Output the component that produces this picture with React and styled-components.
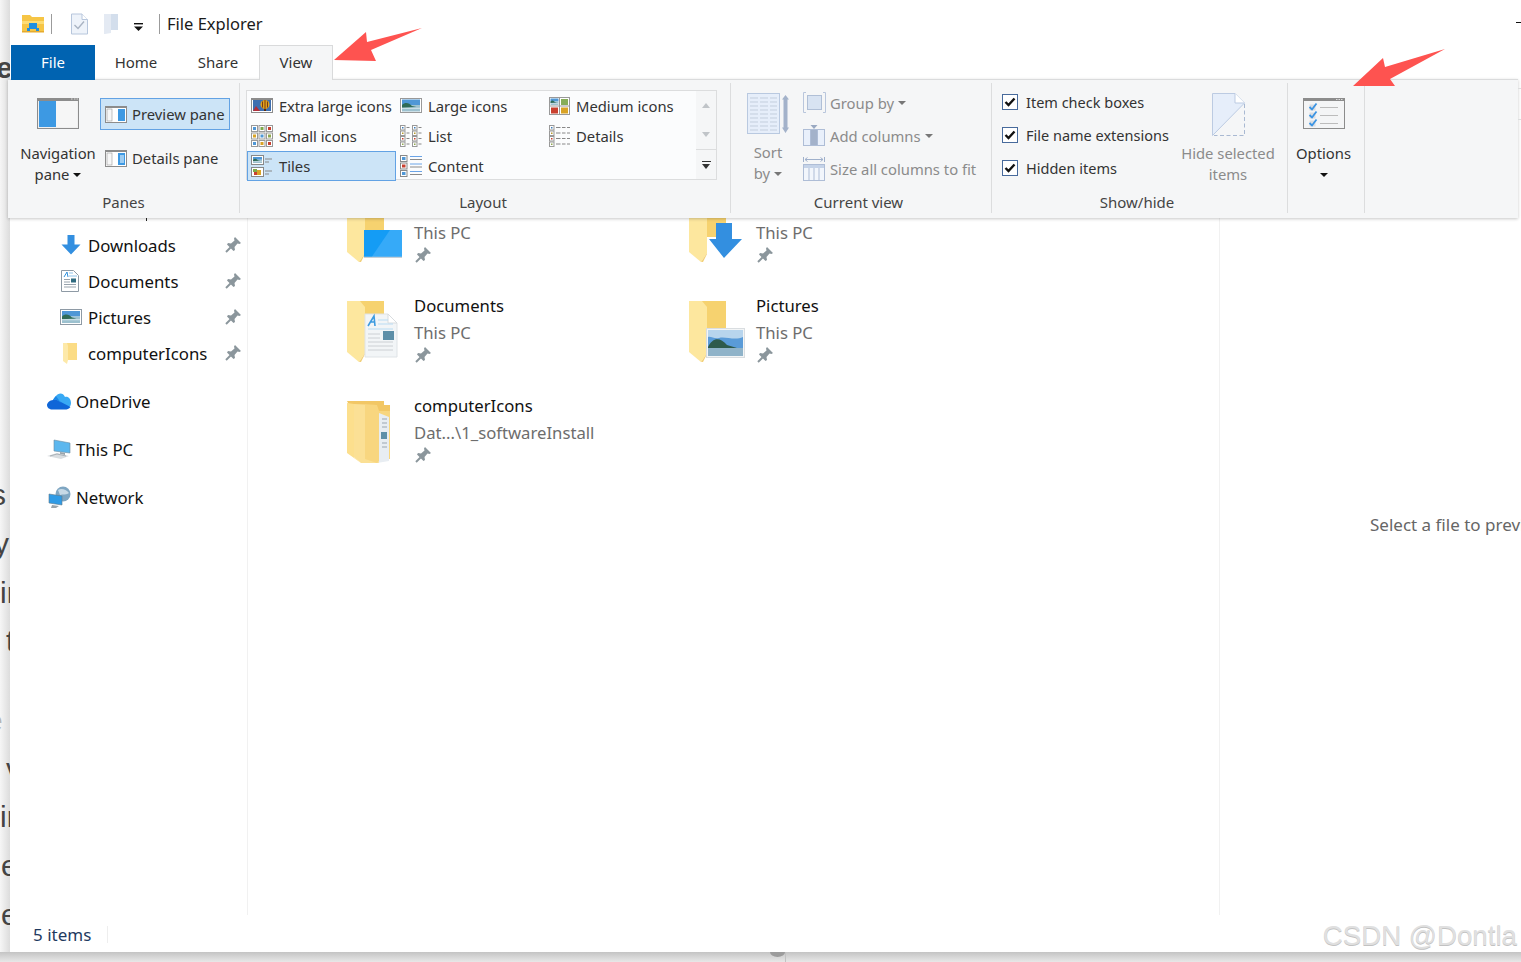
import React from "react";
import styled, { createGlobalStyle } from "styled-components";

const GlobalStyle = createGlobalStyle`
  html, body {
    margin: 0;
    padding: 0;
    background: #e4e4e4;
    font-family: "Noto Sans", "Open Sans", sans-serif;
  }
  * { box-sizing: border-box; }
`;

const Page = styled.div`
  position: relative;
  width: 1521px;
  height: 962px;
  overflow: hidden;
`;

const Desk = styled.div`
  display: flex;
  height: 952px;
`;

const BackEdge = styled.div`
  width: 10px;
  flex: none;
  overflow: hidden;
  padding-top: 48px;
  background: linear-gradient(90deg, #f6f6f6, #dcdcdc);
  font-family: "Liberation Sans", sans-serif;
  font-size: 30px;
  color: #444;
`;

const EdgeLine = styled.div`
  height: ${p => p.$h}px;
  line-height: ${p => p.$h}px;
  white-space: nowrap;
  margin-left: ${p => p.$shift || 0}px;
  font-weight: ${p => (p.$bold ? 700 : 400)};
  opacity: ${p => (p.$faint ? 0.35 : 1)};
`;

const Shade = styled.div`
  position: relative;
  height: 10px;
  overflow: hidden;
  background: linear-gradient(180deg, #c4c4c4, #e8e8e8);
`;

const ShadeThumb = styled.div`
  position: absolute;
  left: 770px;
  top: -5px;
  width: 15px;
  height: 10px;
  border-radius: 50%;
  background: #9c9c9c;
`;

const ShadeLine = styled.div`
  position: absolute;
  left: 785px;
  top: 0;
  width: 1px;
  height: 10px;
  background: #c2c2c2;
`;

const Explorer = styled.div`
  flex: 1;
  min-width: 0;
  display: flex;
  flex-direction: column;
  background: #fff;
`;

const TitleBar = styled.div`
  display: flex;
  align-items: center;
  height: 45px;
  padding: 2px 0 0 12px;
  font-size: 16.5px;
  color: #1a1a1a;
`;

const TitleSep = styled.div`
  width: 1px;
  height: 20px;
  background: #9b9b9b;
  margin: 0 ${p => p.$right}px 0 ${p => p.$left}px;
`;

const QuickIcon = styled.svg`
  flex: none;
  margin-right: ${p => p.$right || 0}px;
  margin-top: ${p => p.$top || 0}px;
`;

const MinGlyph = styled.div`
  margin-left: auto;
  width: 5px;
  height: 1px;
  margin-bottom: 3px;
  background: #111;
`;

const Tabs = styled.div`
  display: flex;
  height: 35px;
  font-size: 15px;
  color: #333;
`;

const Tab = styled.div`
  display: flex;
  align-items: center;
  justify-content: center;
  width: ${p => p.$w}px;
  margin-left: ${p => p.$left || 0}px;
  height: 35px;
  padding-bottom: 2px;
  background: ${p => (p.$file ? "#0063b1" : p.$active ? "#f5f6f7" : "transparent")};
  color: ${p => (p.$file ? "#fff" : "#333")};
  border: ${p => (p.$active ? "1px solid #d9dadb" : "none")};
  border-bottom: none;
  position: relative;
  z-index: 3;
`;

const Ribbon = styled.div`
  position: relative;
  z-index: 2;
  display: flex;
  width: 1510px;
  height: 139px;
  margin: -1px 0 0 -2px;
  padding: 3px 0 5px;
  background: #f5f6f7;
  border-top: 1px solid #dadbdc;
  box-shadow: 0 1px 3px rgba(0, 0, 0, 0.22);
  font-size: 14.8px;
  color: #333;
`;

const Group = styled.div`
  display: flex;
  flex-direction: column;
  width: ${p => p.$w}px;
  flex: none;
  border-right: 1px solid #dcddde;
`;

const GroupBody = styled.div`
  display: flex;
  height: 110px;
  padding: ${p => p.$top || 0}px 0 0 ${p => p.$left || 0}px;
`;

const GroupLabel = styled.div`
  height: 20px;
  line-height: 18px;
  text-align: center;
  font-size: 15px;
  color: #444;
  padding-right: ${p => p.$padr || 0}px;
`;

const BigButton = styled.div`
  display: flex;
  flex-direction: column;
  align-items: center;
  width: ${p => p.$w}px;
  flex: none;
  padding-top: ${p => p.$top || 0}px;
  color: ${p => (p.$off ? "#8b8b8b" : "#333")};
  line-height: 21px;
  text-align: center;
`;

const BigIcon = styled.svg`
  display: block;
  margin-bottom: ${p => p.$gap}px;
`;

const Caret = styled.span`
  display: inline-block;
  width: 0;
  height: 0;
  margin-left: ${p => p.$left ?? 4}px;
  vertical-align: 3px;
  border-left: 4px solid transparent;
  border-right: 4px solid transparent;
  border-top: 4px solid ${p => (p.$off ? "#777" : "#111")};
`;

const PaneColumn = styled.div`
  display: flex;
  flex-direction: column;
  gap: 12px;
  margin-left: 4px;
`;

const PaneButton = styled.div`
  display: flex;
  align-items: center;
  gap: 5px;
  width: 130px;
  height: 32px;
  padding-left: 4px;
  white-space: nowrap;
  border: 1px solid ${p => (p.$on ? "#62a2e4" : "transparent")};
  background: ${p => (p.$on ? "#cce4f7" : "transparent")};
`;

const Gallery = styled.div`
  display: grid;
  grid-template-columns: repeat(3, 149px);
  grid-auto-rows: 30px;
  width: 450px;
  height: 90px;
  background: #fbfcfd;
  border: 1px solid #dcddde;
  border-right: none;
`;

const Cell = styled.div`
  display: flex;
  align-items: center;
  gap: 6px;
  padding: 0 0 1px 4px;
  white-space: nowrap;
  letter-spacing: ${p => (p.$tight ? "-0.13px" : "0")};
  box-shadow: ${p => (p.$on ? "inset 0 0 0 1px #62a2e4" : "none")};
  background: ${p => (p.$on ? "#cce4f7" : "transparent")};
`;

const GalleryScroll = styled.div`
  display: flex;
  flex-direction: column;
  width: 21px;
  height: 90px;
  border: 1px solid #dcddde;
  border-left: none;
`;

const ScrollStep = styled.div`
  display: flex;
  align-items: center;
  justify-content: center;
  flex-direction: column;
  flex: 1;
  gap: 2px;
  border-top: ${p => (p.$more ? "1px solid #dcddde" : "none")};
`;

const Triangle = styled.span`
  width: 0;
  height: 0;
  border-left: 4px solid transparent;
  border-right: 4px solid transparent;
  ${p => p.$up && "border-bottom: 5px solid #c0c4c8;"}
  ${p => p.$down && `border-top: 5px solid ${p.$dark ? "#333" : "#c0c4c8"};`}
`;

const MoreDash = styled.span`
  width: 9px;
  height: 1px;
  background: #333;
`;

const SmallRows = styled.div`
  display: flex;
  flex-direction: column;
  margin-left: ${p => p.$left || 0}px;
  margin-top: ${p => p.$top || 0}px;
  width: ${p => p.$w || "auto"};
`;

const SmallRow = styled.div`
  display: flex;
  align-items: center;
  gap: ${p => p.$gap || 4}px;
  height: 33px;
  white-space: nowrap;
  font-size: ${p => p.$size || "inherit"};
  color: ${p => (p.$off ? "#8b8b8b" : "#333")};
`;

const RibbonEnd = styled.div`
  position: absolute;
  right: -3px;
  top: 8px;
  width: 3px;
  height: 32px;
  border-top: 1px solid #dcddde;
  border-bottom: 1px solid #dcddde;
`;

const Body = styled.div`
  display: flex;
  height: 781px;
  margin-top: -84px;
`;

const Nav = styled.div`
  width: 238px;
  flex: none;
  padding-top: 84px;
  border-right: 1px solid #f1f1f1;
  font-size: 16.8px;
  color: #111;
`;

const NavTick = styled.div`
  width: 1px;
  height: 3px;
  margin: 0 0 6px 136px;
  background: #222;
`;

const NavRow = styled.div`
  display: flex;
  align-items: center;
  height: 36px;
  padding-left: ${p => (p.$top ? 37 : 40)}px;
  padding-right: 6px;
  margin-top: ${p => p.$gap || 0}px;
`;

const NavIcon = styled.svg`
  flex: none;
  margin-left: ${p => p.$left || 0}px;
  margin-right: ${p => p.$right ?? 6}px;
`;

const ArrowSlot = styled.span`
  display: flex;
  flex: none;
  margin: 0 7px 0 11px;
`;

const NavText = styled.span`
  flex: 1;
  white-space: nowrap;
`;

const Main = styled.div`
  flex: 1;
  display: grid;
  grid-template-columns: repeat(2, 342px);
  grid-auto-rows: 100px;
  align-content: start;
  padding: 61px 0 0 99px;
  border-right: 1px solid #f1f1f1;
`;

const Tile = styled.div`
  display: flex;
  align-items: flex-start;
`;

const TileIcon = styled.svg`
  flex: none;
  margin-top: 6px;
`;

const TileText = styled.div`
  display: flex;
  flex-direction: column;
  margin-left: 7px;
  font-size: 16.7px;
  color: #111;
`;

const TileName = styled.div`
  height: 21px;
  line-height: 21px;
`;

const TileSub = styled.div`
  height: 27px;
  line-height: 33px;
  color: #6d6d6d;
  white-space: nowrap;
`;

const TilePin = styled.div`
  margin: 4px 0 0 1px;
  height: 16px;
`;

const Preview = styled.div`
  width: 301px;
  flex: none;
  display: flex;
  align-items: center;
  padding-left: 150px;
  overflow: hidden;
  white-space: nowrap;
  font-size: 17px;
  color: #666;
`;

const StatusBar = styled.div`
  display: flex;
  align-items: center;
  height: 37px;
  padding: 2px 0 0 23px;
  font-size: 17px;
  color: #1f3a5f;
`;

const StatusSep = styled.div`
  width: 1px;
  height: 17px;
  margin-left: 16px;
  background: #eeeeee;
`;

const Watermark = styled.div`
  position: absolute;
  right: 4px;
  top: 918px;
  font-family: "Liberation Sans", sans-serif;
  font-size: 27.7px;
  line-height: 36px;
  color: #e0e0e0;
  text-shadow: 0 1px 0 #c2c2c2;
  white-space: nowrap;
`;

const ArrowLayer = styled.svg`
  position: absolute;
  left: 0;
  top: 0;
  z-index: 5;
  pointer-events: none;
`;

/* little drawings */

const Frame = ({ w = 22, h = 17, children }) => (
  <svg width={w} height={h} viewBox={`0 0 ${w} ${h}`} style={{ flex: "none" }}>
    <rect x="0.5" y="0.5" width={w - 1} height={h - 1} fill="#fff" stroke="#8c8c8c" />
    <rect x="0" y="0" width={w} height="2" fill="#8c8c8c" />
    {children}
  </svg>
);

const Scene = ({ x = 0, y = 0, w = 20, h = 13 }) => (
  <g transform={`translate(${x} ${y}) scale(${w / 20} ${h / 13})`}>
    <rect width="20" height="6" fill="#4f97d6" />
    <rect y="6" width="20" height="7" fill="#9cc1cf" />
    <path d="M0 6 C4 2 8 4 11 7 L16 8 L0 9 Z" fill="#2f6b57" />
    <path d="M0 9 H20 V10 H0 Z" fill="#dce9ef" />
  </g>
);

const NavPaneIcon = () => (
  <BigIcon width="42" height="31" viewBox="0 0 42 31" $gap={14}>
    <rect x="0.5" y="0.5" width="41" height="30" fill="#f0f0f0" stroke="#8c8c8c" />
    <rect x="0" y="0" width="42" height="3" fill="#8c8c8c" />
    <rect x="2" y="3" width="17" height="26" fill="#3d99e3" />
    <rect x="19" y="3" width="21" height="26" fill="#f6f6f6" />
    <path d="M34 1h1.500M37 1h1.500M39.500 1h1.500" stroke="#d8d8d8" />
  </BigIcon>
);

const PreviewPaneIcon = () => (
  <Frame>
    <rect x="2" y="3" width="5" height="12" fill="#f7f7f7" stroke="#999" strokeWidth=".6" />
    <rect x="8" y="3" width="4" height="12" fill="#fff" />
    <rect x="13" y="3" width="7" height="12" fill="#3d99e3" />
  </Frame>
);

const DetailsPaneIcon = () => (
  <Frame>
    <rect x="2" y="3" width="5" height="12" fill="#f7f7f7" stroke="#999" strokeWidth=".6" />
    <rect x="8" y="3" width="4" height="12" fill="#fff" />
    <rect x="13" y="3" width="7" height="12" fill="#3d99e3" />
    <path d="M15 6h4M15 8h4M15 10h4M15 12h4" stroke="#fff" />
  </Frame>
);

const ExtraLargeIcon = () => (
  <Frame h={15}>
    <rect x="2" y="2" width="18" height="11" fill="#3e6fb0" />
    <path d="M2 13 L5 8 L9 13 Z" fill="#b2303a" />
    <circle cx="14" cy="6.500" r="4.500" fill="#e0a21b" />
    <path d="M14 2v9M11.500 3.500v6M16.500 3.500v6" stroke="#7a3b12" />
    <rect x="13" y="11" width="2" height="2" fill="#5a2b0c" />
  </Frame>
);

const LargeIcon = () => (
  <svg width="22" height="15" viewBox="0 0 22 15" style={{ flex: "none" }}>
    <rect x="0.500" y="0.500" width="21" height="14" fill="#fff" stroke="#999" />
    <Scene x={2} y={1.5} w={18} h={12} />
  </svg>
);

const tints = ["#4f97d6", "#7eaa4a", "#c9402f", "#d9a326", "#4f97d6", "#8fa84e", "#4f97d6", "#d9a326", "#c9402f"];

const SmallIconsIcon = () => (
  <svg width="22" height="22" viewBox="0 0 22 22" style={{ flex: "none" }}>
    {tints.map((c, i) => (
      <g key={i} transform={`translate(${(i % 3) * 7.5} ${Math.floor(i / 3) * 7.5})`}>
        <rect x="0.500" y="0.500" width="6" height="6" fill="#fff" stroke="#999" />
        <rect x="2" y="2" width="3" height="3" fill={c} />
      </g>
    ))}
  </svg>
);

const MediumIcon = () => (
  <svg width="21" height="18" viewBox="0 0 21 18" style={{ flex: "none" }}>
    <rect x="0.500" y="0.500" width="20" height="17" fill="#fff" stroke="#999" />
    <path d="M10.500 0v18M0 9h21" stroke="#999" />
    <Scene x={1.5} y={1.5} w={8} h={6.5} />
    <rect x="12" y="2" width="7" height="6" fill="#86ad58" />
    <rect x="2" y="10.500" width="7" height="6" fill="#c9402f" />
    <rect x="12" y="10.500" width="7" height="6" fill="#d9a326" />
  </svg>
);

const listDots = ["#3c7cb8", "#b89a2e", "#c9402f", "#8fa84e"];

const ListIcon = () => (
  <svg width="22" height="22" viewBox="0 0 22 22" style={{ flex: "none" }}>
    {[0, 12].map(x =>
      listDots.map((c, i) => (
        <g key={`${x}${i}`} transform={`translate(${x} ${i * 5.5})`}>
          <rect x="0.500" y="0.500" width="4.500" height="4.500" fill="#fff" stroke="#999" />
          <rect x="2" y="2" width="1.500" height="1.500" fill={c} />
          <path d="M6.500 2.500h3" stroke="#888" />
        </g>
      ))
    )}
  </svg>
);

const DetailsIcon = () => (
  <svg width="21" height="22" viewBox="0 0 21 22" style={{ flex: "none" }}>
    {listDots.map((c, i) => (
      <g key={i} transform={`translate(0 ${i * 5.5})`}>
        <rect x="0.500" y="0.500" width="4.500" height="4.500" fill="#fff" stroke="#999" />
        <rect x="2" y="2" width="1.500" height="1.500" fill={c} />
        <path d="M7 2.500h4.500M13 2.500h3.500M18 2.500h3" stroke="#888" />
      </g>
    ))}
  </svg>
);

const TilesIcon = () => (
  <svg width="22" height="22" viewBox="0 0 22 22" style={{ flex: "none" }}>
    <rect x="0.500" y="0.500" width="12" height="9" fill="#fff" stroke="#888" />
    <Scene x={2} y={2} w={9} h={6} />
    <rect x="0.500" y="12.500" width="12" height="9" fill="#fff" stroke="#888" />
    <rect x="2" y="14" width="4" height="3" fill="#7eaa4a" />
    <rect x="6" y="15" width="4" height="5" fill="#d9a326" />
    <rect x="3" y="17" width="3" height="3" fill="#c9402f" />
    <path d="M14 4h7M14 7h4M14 16h7M14 19h4" stroke="#888" />
  </svg>
);

const ContentIcon = () => (
  <svg width="22" height="22" viewBox="0 0 22 22" style={{ flex: "none" }}>
    {["#4f97d6", "#c9402f", "#4f97d6"].map((c, i) => (
      <g key={i} transform={`translate(0 ${i * 7.5})`}>
        <rect x="0.500" y="0.500" width="6.500" height="6" fill="#fff" stroke="#888" />
        <rect x="2" y="2" width="3.500" height="3" fill={c} />
        <path d="M10 1.500h12" stroke="#6ba4e7" />
        <path d="M10 4.500h12" stroke="#8a8a8a" />
      </g>
    ))}
  </svg>
);

const SortIcon = () => (
  <BigIcon width="42" height="43" viewBox="0 0 42 43" $gap={7}>
    <rect x="0.500" y="1.500" width="32" height="40" fill="#e6eefa" stroke="#b9c9e0" />
    {[6, 10, 14, 18, 22, 26, 30, 34, 38].map(y => (
      <path key={y} d={`M3 ${y}h8M13 ${y}h8M23 ${y}h7`} stroke="#c3cedd" />
    ))}
    <path d="M38.500 3 L42 7.500 H40.500 V35.500 H42 L38.500 41 L35 35.500 H36.500 V7.500 H35 Z" fill="#a3b2ca" />
  </BigIcon>
);

const GroupByIcon = () => (
  <svg width="23" height="21" viewBox="0 0 23 21" style={{ flex: "none" }}>
    <path d="M3 .5H.5v20H3M20 .5h2.500v20H20" fill="none" stroke="#b9c6dc" />
    <rect x="4.500" y="3.500" width="14" height="14" fill="#d8e3f2" stroke="#b0bfd6" />
  </svg>
);

const AddColumnsIcon = () => (
  <svg width="23" height="21" viewBox="0 0 23 21" style={{ flex: "none" }}>
    <rect x="0.500" y="4.500" width="21" height="16" fill="#e9f0fb" stroke="#aebdd6" />
    <rect x="8" y="5" width="6" height="15" fill="#a3b2ca" />
    <path d="M7.500 5v15M14.500 5v15" stroke="#aebdd6" />
    <path d="M7.500 0h7L11 4z" fill="#9aa9c2" />
  </svg>
);

const SizeColumnsIcon = () => (
  <svg width="23" height="24" viewBox="0 0 23 24" style={{ flex: "none" }}>
    <path d="M.5 0v5M21.500 0v5M2 2.500h18M2 2.500l2.500-2M2 2.500l2.500 2M20 2.500l-2.500-2M20 2.500l-2.500 2" fill="none" stroke="#9fb0cb" />
    <rect x="0.500" y="7.500" width="21" height="16" fill="#f2f6fc" stroke="#aebdd6" />
    <rect x="1" y="8" width="20" height="3" fill="#c5d3e8" />
    <path d="M6 11v12M11 11v12M16 11v12" stroke="#aebdd6" />
  </svg>
);

const CheckBox = () => (
  <svg width="16" height="16" viewBox="0 0 16 16" style={{ flex: "none" }}>
    <rect x="0.500" y="0.500" width="15" height="15" fill="#fff" stroke="#476a9c" />
    <path d="M3.500 8 L6.500 11 L12.500 4.500" fill="none" stroke="#111" strokeWidth="2.400" />
  </svg>
);

const HideIcon = () => (
  <BigIcon width="33" height="43" viewBox="0 0 33 43" $gap={7}>
    <path d="M.5.5H23L32.500 10L.5 42.500Z" fill="#e6eefa" stroke="#bccbe2" />
    <path d="M32.500 11V42.500H2" fill="none" stroke="#a9b9d2" strokeDasharray="4 2.500" />
    <path d="M23 .5V10H32.500" fill="#fff" stroke="#bccbe2" />
  </BigIcon>
);

const OptionsIcon = () => (
  <BigIcon width="42" height="31" viewBox="0 0 42 31" $gap={14}>
    <rect x="0.500" y="0.500" width="41" height="30" fill="#f4f5f6" stroke="#8c8c8c" />
    <rect x="0" y="0" width="42" height="3" fill="#8c8c8c" />
    <path d="M33 1.500h1.500M35.500 1.500h1.500M38 1.500h1.500" stroke="#ddd" />
    {[6, 14, 22].map(y => (
      <g key={y}>
        <rect x="6.500" y={y + 0.5} width="6" height="6" fill="#d9dde2" />
        <path d={`M6.500 ${y + 3} l2.500 2.500 l4.500 -6`} fill="none" stroke="#3b94e3" strokeWidth="1.800" />
        <path d={`M17 ${y + 3.5}h18`} stroke="#bcbcbc" />
      </g>
    ))}
  </BigIcon>
);

const Pin = () => (
  <svg width="16" height="16" viewBox="0 0 16 16" style={{ flex: "none", display: "block" }}>
    <path d="M10 0 L16 6 L14.500 7 L12.500 6.500 L9.500 10 L10 13 L8.500 14 L2 7.500 L3 6 L6 6.500 L9.500 3.500 L9 1.500 Z" fill="#8b969c" />
    <path d="M5.500 10.500 L1 15" stroke="#8b969c" strokeWidth="2" />
  </svg>
);

const DownArrowIcon = () => (
  <svg width="20" height="20" viewBox="0 0 20 20" style={{ flex: "none" }}>
    <path d="M6.500 0H13.500V9.500H19.500L10 19.500L.5 9.500H6.500Z" fill="#338fe0" />
  </svg>
);

const FolderBack = () => (
  <>
    <path d="M13 0H37V36H13Z" fill="#f6d26f" />
    <path d="M0 0H13L18 6V52L12 61L0 51Z" fill="#fde79e" />
    <path d="M18 6V52L12 61L14 61L18 53Z" fill="#f2cf78" />
  </>
);

const folderFor = {
  desktop: (
    <>
      <FolderBack />
      <path d="M17 29H55V57H17Z" fill="#149cf5" />
      <path d="M24 57 L43 29H55V57Z" fill="#36aaf8" />
      <path d="M17 55.800H55V57H17Z" fill="#c6cfd6" />
    </>
  ),
  downloads: (
    <>
      <FolderBack />
      <path d="M27 22H43V38H53L35 57L20 38H27Z" fill="#338fe0" />
    </>
  ),
  documents: (
    <>
      <FolderBack />
      <path d="M18 13H41L50 22V56H18Z" fill="#f2f5f7" stroke="#dfe3e6" />
      <path d="M41 13V22H50Z" fill="#fff" stroke="#d8dcdf" />
      <path d="M21 25 L27 15 L28 25 M23.500 21H28" fill="none" stroke="#3d9be0" strokeWidth="1.600" />
      <path d="M31 19H41M31 23H46M21 28H46" stroke="#b9dcf3" />
      <rect x="36" y="30" width="11" height="9" fill="#5d8fa8" />
      <path d="M21 33H33M21 37H33M21 41H46M21 45H46M21 49H46" stroke="#ccd0d4" />
    </>
  ),
  pictures: (
    <>
      <FolderBack />
      <rect x="17.500" y="27.500" width="38" height="29" fill="#f3f5f6" stroke="#d9dde0" />
      <rect x="19" y="29" width="35" height="26" fill="#5a9bd8" />
      <path d="M19 29H54V36C46 40 36 35 30 37C25 38 22 35 19 36Z" fill="#cfe3f3" opacity=".8" />
      <path d="M19 46 C24 36 31 36 38 44 L48 47 L19 50Z" fill="#2e5a4b" />
      <rect x="19" y="47" width="35" height="8" fill="#8fb3c9" />
    </>
  ),
  plain: (
    <>
      <path d="M0 0H37V4H43V58H30Z" fill="#f2c765" />
      <path d="M30 10H43V58H30Z" fill="#f8d67f" />
      <path d="M32 12 L42 16 V60 L30 62Z" fill="#e8edf2" />
      <path d="M35 18H40M35 22H40M35 26H40M35 42H40M35 46H40" stroke="#9aa5b0" />
      <rect x="34" y="31" width="6" height="7" fill="#5d8fa8" />
      <path d="M0 2 L7 3 V56 L14 62 L0 52Z" fill="#fcdf8d" />
      <path d="M7 3 L30 4 V56 L32 62 L14 62 L7 56Z" fill="#fbe095" />
      <path d="M18 4 L30 4 L32 10 V60L30 62L18 58Z" fill="#f8d67f" />
    </>
  ),
};

const FolderTile = ({ kind }) => (
  <TileIcon width="60" height="62" viewBox="0 0 60 62">
    {folderFor[kind]}
  </TileIcon>
);

const TitleFolder = () => (
  <QuickIcon width="22" height="20" viewBox="0 0 22 20">
    <path d="M0 1H8L10 3H22V18H0Z" fill="#f6c545" />
    <rect x="0" y="7" width="22" height="3" fill="#fddc74" />
    <path d="M7 9H15V14H17V18H14V15H8V18H5V14H7Z" fill="#1f8fdf" />
    <rect x="0" y="17" width="22" height="1.500" fill="#e6ab2e" />
  </QuickIcon>
);

const QuickCheck = () => (
  <QuickIcon width="17" height="22" viewBox="0 0 17 22" $right={16}>
    <path d="M.5 1H11L16.500 6.500V21H.5Z" fill="#eef3fa" stroke="#b7c6dc" />
    <path d="M11 1V6.500H16.500" fill="#fff" stroke="#b7c6dc" />
    <path d="M3.500 12 L7 15.500 L13 8.500" fill="none" stroke="#a9b3c2" strokeWidth="1.400" />
  </QuickIcon>
);

const QuickFolder = () => (
  <QuickIcon width="15" height="21" viewBox="0 0 15 21" $right={15}>
    <path d="M0 1H7V20L1 21H0Z" fill="#e4eaf3" />
    <path d="M7 1H14V17H7Z" fill="#d3deec" />
  </QuickIcon>
);

const QuickDrop = () => (
  <QuickIcon width="9" height="8" viewBox="0 0 9 8" $top={6}>
    <rect x="0" y="0" width="9" height="1.400" fill="#111" />
    <path d="M0 3.500H9L4.500 8Z" fill="#111" />
  </QuickIcon>
);

const DocIcon = () => (
  <NavIcon width="18" height="22" viewBox="0 0 18 22" $right={9} $left={11}>
    <path d="M.5.5H12.500L17.500 5.500V21.500H.5Z" fill="#fff" stroke="#8e9aa5" />
    <path d="M3 7 L6 2 L7 7" fill="none" stroke="#2f8fdc" />
    <path d="M8 3h4M8 6h8" stroke="#8ec3ea" />
    <rect x="10" y="8.500" width="5" height="4" fill="#2f6b80" />
    <path d="M3 9.500h6M3 12h6M3 14.500h12M3 17h12" stroke="#98a3ad" />
  </NavIcon>
);

const PicIcon = () => (
  <NavIcon width="22" height="16" viewBox="0 0 22 16" $right={6} $left={10}>
    <rect x=".5" y=".5" width="21" height="15" fill="#fff" stroke="#8e9aa5" />
    <Scene x={2} y={2} w={18} h={12} />
  </NavIcon>
);

const NavFolder = () => (
  <NavIcon width="14" height="21" viewBox="0 0 14 21" $right={11} $left={13}>
    <path d="M4 0H14V17H4Z" fill="#fbdc85" />
    <path d="M0 0H4L5 3V17L4 21L0 18Z" fill="#fde9a9" />
  </NavIcon>
);

const OneDriveIcon = () => (
  <NavIcon width="24" height="17" viewBox="0 0 24 17" $right={5}>
    <path d="M9 3 C11 0 16 -1 18 4 C21 3 24 6 24 10 C24 14 21 15 19 15 H12 L6 7 C7 5 8 4 9 3Z" fill="#38a9f4" />
    <path d="M6 7 C3 7 0 10 0 12 C0 15 3 16.500 5 16.500 H18 C20 16.500 22 16 23.500 14 L10 7 C9 6.500 8 6.500 6 7Z" fill="#0f66d8" />
    <path d="M6 7 C7 5 8 4 9 3 L14 10 L10 7 C9 6.500 8 6.500 6 7Z" fill="#1a86e6" />
  </NavIcon>
);

const ThisPcIcon = () => (
  <NavIcon width="24" height="20" viewBox="0 0 24 20" $right={5}>
    <path d="M7 1 L23 4 V14 L7 12Z" fill="#5cb7ee" stroke="#6b8ba0" strokeWidth=".6" />
    <path d="M13 13 L18 14 V16 L13 15.500Z" fill="#9aa4ab" />
    <path d="M0 17 L10 14 L22 17 L14 20 Z" fill="#d9dde0" />
    <path d="M3 17 L10 15 L19 17" fill="none" stroke="#aab1b7" />
  </NavIcon>
);

const NetworkIcon = () => (
  <NavIcon width="23" height="22" viewBox="0 0 23 22" $right={5} $left={1}>
    <circle cx="15" cy="8" r="7.500" fill="#7fa6c2" />
    <path d="M10 4 C13 2 18 3 21 7 C19 9 15 8 12 9Z" fill="#c7d9e6" />
    <path d="M1 8 L14 10 V19 L1 17Z" fill="#2f9be6" stroke="#607a8c" strokeWidth=".6" />
    <path d="M4 19 L11 20 L8 22 H3Z" fill="#9aa4ab" />
  </NavIcon>
);

const layoutCells = [
  { label: "Extra large icons", icon: <ExtraLargeIcon />, tight: true },
  { label: "Large icons", icon: <LargeIcon /> },
  { label: "Medium icons", icon: <MediumIcon /> },
  { label: "Small icons", icon: <SmallIconsIcon /> },
  { label: "List", icon: <ListIcon /> },
  { label: "Details", icon: <DetailsIcon /> },
  { label: "Tiles", icon: <TilesIcon />, on: true },
  { label: "Content", icon: <ContentIcon /> },
];

const pinned = [
  { label: "Downloads", icon: <ArrowSlot><DownArrowIcon /></ArrowSlot> },
  { label: "Documents", icon: <DocIcon /> },
  { label: "Pictures", icon: <PicIcon /> },
  { label: "computerIcons", icon: <NavFolder /> },
];

const tiles = [
  { path: "This PC", kind: "desktop" },
  { path: "This PC", kind: "downloads" },
  { name: "Documents", path: "This PC", kind: "documents" },
  { name: "Pictures", path: "This PC", kind: "pictures" },
  { name: "computerIcons", path: "Dat...\\1_softwareInstall", kind: "plain" },
];

const edgeLines = [
  { t: "e", h: 40, bold: true, shift: -4 },
  { t: "", h: 383 },
  { t: "s", h: 48, shift: -9 },
  { t: "y", h: 50, shift: -6 },
  { t: "ir", h: 48, shift: 0 },
  { t: "t", h: 48, shift: 6 },
  { t: "", h: 32 },
  { t: "e", h: 48, shift: -14, faint: true },
  { t: "v", h: 48, shift: 6 },
  { t: "ir", h: 48, shift: 0 },
  { t: "e", h: 50, shift: 1 },
  { t: "e", h: 48, shift: 1 },
];

const App = () => (
  <Page>
    <GlobalStyle />
    <Desk>
      <BackEdge>
        {edgeLines.map((l, i) => (
          <EdgeLine key={i} $h={l.h} $shift={l.shift} $bold={l.bold} $faint={l.faint}>{l.t}</EdgeLine>
        ))}
      </BackEdge>
      <Explorer>
        <TitleBar>
          <TitleFolder />
          <TitleSep $left={7} $right={19} />
          <QuickCheck />
          <QuickFolder />
          <QuickDrop />
          <TitleSep $left={16} $right={7} />
          File Explorer
          <MinGlyph />
        </TitleBar>
        <Tabs>
          <Tab $file $w={84} $left={1}>File</Tab>
          <Tab $w={82}>Home</Tab>
          <Tab $w={82}>Share</Tab>
          <Tab $active $w={74}>View</Tab>
        </Tabs>
        <Ribbon>
          <Group $w={232}>
            <GroupBody $top={15} $left={12}>
              <BigButton $w={76}>
                <NavPaneIcon />
                <div>Navigation</div>
                <div>pane<Caret /></div>
              </BigButton>
              <PaneColumn>
                <PaneButton $on><PreviewPaneIcon />Preview pane</PaneButton>
                <PaneButton><DetailsPaneIcon />Details pane</PaneButton>
              </PaneColumn>
            </GroupBody>
            <GroupLabel>Panes</GroupLabel>
          </Group>
          <Group $w={491}>
            <GroupBody $top={7} $left={6}>
              <Gallery>
                {layoutCells.map(c => (
                  <Cell key={c.label} $on={c.on} $tight={c.tight}>{c.icon}{c.label}</Cell>
                ))}
              </Gallery>
              <GalleryScroll>
                <ScrollStep><Triangle $up /></ScrollStep>
                <ScrollStep><Triangle $down /></ScrollStep>
                <ScrollStep $more><MoreDash /><Triangle $down $dark /></ScrollStep>
              </GalleryScroll>
            </GroupBody>
            <GroupLabel $padr={4}>Layout</GroupLabel>
          </Group>
          <Group $w={261}>
            <GroupBody $top={9} $left={13}>
              <BigButton $w={48} $off>
                <SortIcon />
                <div>Sort</div>
                <div>by<Caret $off /></div>
              </BigButton>
              <SmallRows $left={11} $top={-6}>
                <SmallRow $off><GroupByIcon />Group by<Caret $off $left={0} /></SmallRow>
                <SmallRow $off><AddColumnsIcon />Add columns<Caret $off $left={0} /></SmallRow>
                <SmallRow $off><SizeColumnsIcon />Size all columns to fit</SmallRow>
              </SmallRows>
            </GroupBody>
            <GroupLabel $padr={5}>Current view</GroupLabel>
          </Group>
          <Group $w={296}>
            <GroupBody $top={2} $left={10}>
              <SmallRows $w="176px">
                <SmallRow $gap={8} $size="14.5px"><CheckBox />Item check boxes</SmallRow>
                <SmallRow $gap={8} $size="14.5px"><CheckBox />File name extensions</SmallRow>
                <SmallRow $gap={8} $size="14.5px"><CheckBox />Hidden items</SmallRow>
              </SmallRows>
              <BigButton $w={100} $off $top={8}>
                <HideIcon />
                <div>Hide selected</div>
                <div>items</div>
              </BigButton>
            </GroupBody>
            <GroupLabel $padr={5}>Show/hide</GroupLabel>
          </Group>
          <Group $w={77}>
            <GroupBody $top={15}>
              <BigButton $w={71}>
                <OptionsIcon />
                <div>Options</div>
                <div><Caret $left={0} /></div>
              </BigButton>
            </GroupBody>
          </Group>
          <RibbonEnd />
        </Ribbon>
        <Body>
          <Nav>
            <NavTick />
            {pinned.map(p => (
              <NavRow key={p.label}>
                {p.icon}
                <NavText>{p.label}</NavText>
                <Pin />
              </NavRow>
            ))}
            <NavRow $top $gap={12}><OneDriveIcon /><NavText>OneDrive</NavText></NavRow>
            <NavRow $top $gap={12}><ThisPcIcon /><NavText>This PC</NavText></NavRow>
            <NavRow $top $gap={12}><NetworkIcon /><NavText>Network</NavText></NavRow>
          </Nav>
          <Main>
            {tiles.map(t => (
              <Tile key={t.kind}>
                <FolderTile kind={t.kind} />
                <TileText>
                  <TileName>{t.name}</TileName>
                  <TileSub>{t.path}</TileSub>
                  <TilePin><Pin /></TilePin>
                </TileText>
              </Tile>
            ))}
          </Main>
          <Preview>Select a file to preview</Preview>
        </Body>
        <StatusBar>
          5 items
          <StatusSep />
        </StatusBar>
      </Explorer>
    </Desk>
    <Shade>
      <ShadeThumb />
      <ShadeLine />
    </Shade>
    <Watermark>CSDN @Dontla</Watermark>
    <ArrowLayer width="1521" height="962" viewBox="0 0 1521 962">
      <path d="M334 60 L366 32 L367 42 L422 28 L371 50 L376 61 Z" fill="#fe5350" />
      <path d="M1353 86 L1383 58 L1385 67 L1445 49 L1390 79 L1395 86 Z" fill="#fe5350" />
    </ArrowLayer>
  </Page>
);

export default App;
